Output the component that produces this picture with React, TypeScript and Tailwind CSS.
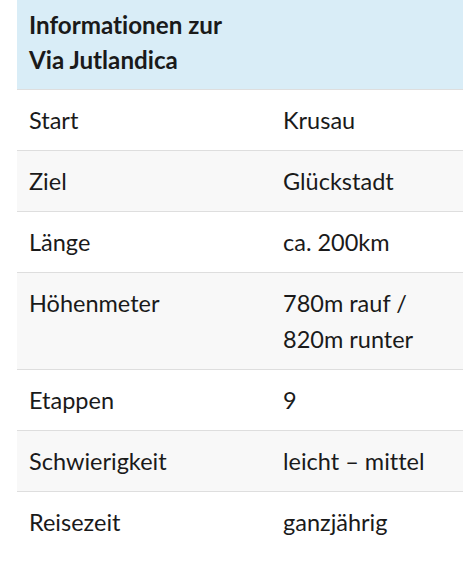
const ROWS: { label: string; value: string[] }[] = [
  { label: "Start", value: ["Krusau"] },
  { label: "Ziel", value: ["Glückstadt"] },
  { label: "Länge", value: ["ca. 200km"] },
  { label: "Höhenmeter", value: ["780m rauf /", "820m runter"] },
  { label: "Etappen", value: ["9"] },
  { label: "Schwierigkeit", value: ["leicht – mittel"] },
  { label: "Reisezeit", value: ["ganzjährig"] },
];

export default function App() {
  return (
    <div className="min-h-[583px] bg-white font-['Lato','Noto_Sans',sans-serif] text-[#1a1a1a] [font-variant-ligatures:none]">
      <div className="ml-[17px] w-[446px]">
        <div className="bg-[#d9edf7] px-3 pt-[7px] pb-[12px] text-[24.2px] leading-[35px] font-bold">
          Informationen zur
          <br />
          Via Jutlandica
        </div>
        {ROWS.map((row, i) => (
          <div
            key={row.label}
            className={
              "grid grid-cols-[254px_1fr] border-t border-[#dedede] text-[23.5px] leading-[36px] " +
              (i % 2 === 1 ? "bg-[#f8f8f8]" : "bg-white")
            }
          >
            <div className="px-3 py-3">{row.label}</div>
            <div className="px-3 py-3">
              {row.value.map((v) => (
                <div key={v}>{v}</div>
              ))}
            </div>
          </div>
        ))}
      </div>
    </div>
  );
}
